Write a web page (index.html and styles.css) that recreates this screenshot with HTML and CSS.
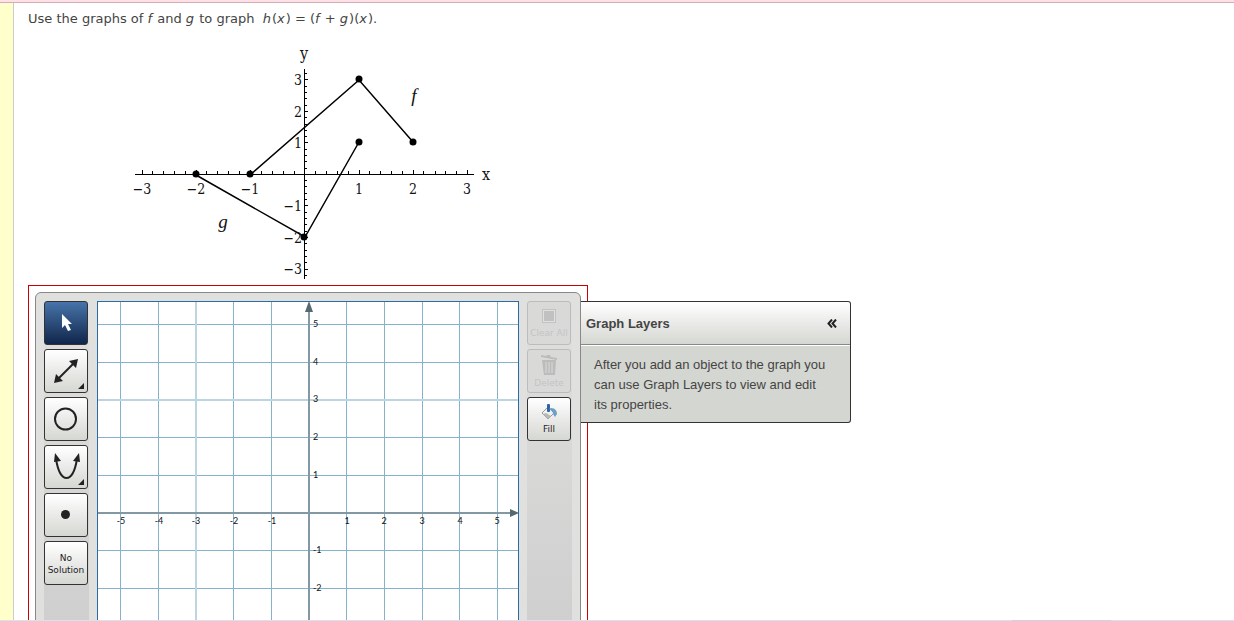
FILE: index.html
```html
<!DOCTYPE html>
<html lang="en">
<head>
<meta charset="utf-8">
<title>Graphing question</title>
<link rel="stylesheet" href="styles.css">
</head>
<body>
<div class="page">
  <div class="topline"></div>
  <div class="sheet">
    <div class="margin-strip"></div>
    <main class="question">
      <p class="prompt">Use the graphs of <i>f</i> and <i>g</i> to graph &nbsp;<i>h</i>(<i>x</i>) = (<i>f</i> + <i>g</i>)(<i>x</i>).</p>
      <svg class="figure" width="370" height="236" viewBox="-176 -129 370 236" role="img" aria-label="Graphs of f and g">
        <g class="axis">
          <path d="M-169 .5H170M.5 -105V105"/>
          <path d="M-161.500 0v-4M-151.500 0v-3M-140.500 0v-3M-129.500 0v-3M-118.500 0v-3M-107.500 0v-4M-97.500 0v-3M-86.500 0v-3M-75.500 0v-3M-64.500 0v-3M-53.500 0v-4M-42.500 0v-3M-31.500 0v-3M-20.500 0v-3M-9.500 0v-3M11.500 0v-3M22.500 0v-3M33.500 0v-3M44.500 0v-3M55.500 0v-4M65.500 0v-3M76.500 0v-3M87.500 0v-3M98.500 0v-3M109.500 0v-4M119.500 0v-3M131.500 0v-3M141.500 0v-3M152.500 0v-3M163.500 0v-4"/>
          <path d="M1 -100.500h2M1 -94.500h3M1 -87.500h2M1 -81.500h2M1 -75.500h2M1 -68.500h2M1 -62.500h3M1 -56.500h2M1 -49.500h2M1 -43.500h2M1 -37.500h2M1 -31.500h3M1 -24.500h2M1 -18.500h2M1 -12.500h2M1 -5.500h2M1 6.500h2M1 12.500h2M1 19.500h2M1 25.500h2M1 31.500h3M1 38.500h2M1 44.500h2M1 50.500h2M1 57.500h2M1 63.500h3M1 69.500h2M1 76.500h2M1 82.500h2M1 88.500h2M1 95.500h3M1 101.500h2"/>
        </g>
        <g class="curve"><path d="M-54 1L55 -94L109 -32M-108 1L1 63L55 -32"/></g>
        <g>
          <circle cx="-54" cy="0" r="3.500"/><circle cx="55" cy="-95" r="3.500"/><circle cx="109" cy="-32" r="3.500"/>
          <circle cx="-108" cy="0" r="3.500"/><circle cx="0" cy="63" r="3.500"/><circle cx="55" cy="-32" r="3.500"/>
        </g>
        <g class="num mid">
          <text x="-162" y="20">−3</text><text x="-108" y="20">−2</text><text x="-54" y="20">−1</text>
          <text x="55" y="20">1</text><text x="109" y="20">2</text><text x="163" y="20">3</text>
        </g>
        <g class="num end">
          <text x="-2" y="-89">3</text><text x="-2" y="-57">2</text><text x="-2" y="-26">1</text>
          <text x="-2" y="37">−1</text><text x="-2" y="69">−2</text><text x="-2" y="100">−3</text>
        </g>
        <g class="name mid"><text x="0" y="-115">y</text><text x="182" y="6">x</text></g>
        <g class="name slant mid"><text x="110" y="-72">f</text><text x="-81" y="54">g</text></g>
      </svg>

      <div class="tool-frame">
        <div class="tool">
          <div class="rail">
            <button class="btn btn-active" type="button" aria-label="Select">
              <svg width="42" height="42" viewBox="0 0 42 42"><path fill="#fff" d="M17 12v14l3-3 3 6 3-1-3-6h4z"/></svg>
            </button>
            <button class="btn" type="button" aria-label="Line">
              <svg width="42" height="42" viewBox="0 0 42 42"><path d="M13 29L30 12" stroke="#222" stroke-width="2"/><path fill="#222" d="M33 9l-2 9-7-7zM9 33l2-9 7 7zM39 33v6h-6z"/></svg>
            </button>
            <button class="btn" type="button" aria-label="Circle">
              <svg width="42" height="42" viewBox="0 0 42 42"><circle cx="20.500" cy="21" r="10.500" fill="none" stroke="#222" stroke-width="2"/></svg>
            </button>
            <button class="btn" type="button" aria-label="Parabola">
              <svg width="42" height="42" viewBox="0 0 42 42"><path d="M11 13C13 25 16 32 21.500 32S30 25 32 13" fill="none" stroke="#222" stroke-width="2"/><path fill="#222" d="M10 7l6 8-7 1zM34 7l1 9-7-1zM39 33v6h-6z"/></svg>
            </button>
            <button class="btn" type="button" aria-label="Point">
              <svg width="42" height="42" viewBox="0 0 42 42"><circle cx="20.500" cy="20.500" r="4.500" fill="#222"/></svg>
            </button>
            <button class="btn btn-text" type="button">No<br>Solution</button>
          </div>

          <svg class="plot" viewBox="-211 -211 420 420" role="img" aria-label="Coordinate grid">
            <path class="grid" d="M-188.500 -211V209M-150.500 -211V209M-75.500 -211V209M-37.500 -211V209M37.500 -211V209M75.500 -211V209M113.500 -211V209M150.500 -211V209M188.500 -211V209M-211 -188.500H209M-211 -150.500H209M-211 -75.500H209M-211 -37.500H209M-211 37.500H209M-211 75.500H209M-211 150.500H209M-211 188.500H209"/>
            <path class="grid grid-soft" d="M-113 -211V209M-211 -113H209M-211 113H209"/>
            <path class="main-axis" d="M0 -204V209M-211 0H204"/>
            <path class="arrow" d="M0 -212l4 11h-8zM210 0l-9 4v-8z"/>
            <g class="tick mid">
              <text x="-188" y="11">-5</text><text x="-150" y="11">-4</text><text x="-113" y="11">-3</text><text x="-75" y="11">-2</text><text x="-37" y="11">-1</text>
              <text x="38" y="11">1</text><text x="75" y="11">2</text><text x="113" y="11">3</text><text x="151" y="11">4</text><text x="188" y="11">5</text>
            </g>
            <g class="tick">
              <text x="4" y="-186">5</text><text x="4" y="-148">4</text><text x="4" y="-111">3</text><text x="4" y="-73">2</text><text x="4" y="-35">1</text>
              <text x="4" y="40">-1</text><text x="4" y="78">-2</text>
            </g>
          </svg>

          <div class="rail">
            <button class="btn btn-off" type="button" disabled>
              <svg width="22" height="20" viewBox="0 0 22 20"><rect x="4.500" y="2.500" width="13" height="13" fill="#e4e4e4" stroke="#bbb"/><rect x="6" y="4" width="10" height="10" fill="#b8b8b8"/></svg>
              <span>Clear All</span>
            </button>
            <button class="btn btn-off" type="button" disabled>
              <svg width="20" height="23" viewBox="0 0 20 23"><path fill="#b0b0b0" d="M2 1l5 1 1-1h3l1 2 6 1v2L2 3zM3 6h14l-1 15H5z"/><path d="M7 8v11M10 8v11M13 8v11" stroke="#ddd"/></svg>
              <span>Delete</span>
            </button>
            <button class="btn" type="button">
              <svg width="22" height="20" viewBox="0 0 22 20"><path d="M10 4l6 6-6 6-6-6z" fill="#f0f0ee" stroke="#999"/><path d="M5 11l5 5 3-3-5-3z" fill="#b8b8b6"/><rect x="9" y="1" width="3" height="8" rx="1" fill="#2c64a8"/><path d="M13 5c4 0 6 3 6 6l-2 3-2-3c0-2-1-4-4-5z" fill="#6d9fc8"/></svg>
              <span>Fill</span>
            </button>
          </div>

          <aside class="layers">
            <div class="layers-head">
              <h2 class="layers-title">Graph Layers</h2>
              <button class="collapse" type="button" aria-label="Collapse">
                <svg width="10" height="9" viewBox="0 0 10 9"><path d="M5 .5L1.500 4.500 5 8.500M9 .5L5.500 4.500 9 8.500" fill="none" stroke="#222" stroke-width="2"/></svg>
              </button>
            </div>
            <p class="layers-text">After you add an object to the graph you can use Graph Layers to view and edit its properties.</p>
          </aside>
        </div>
      </div>
    </main>
  </div>
  <div class="bottomline"></div>
</div>
</body>
</html>
```
FILE: styles.css
```css
* { box-sizing: border-box; }
body {
  margin: 0;
  background: #fff;
  color: #444;
  font-family: "Liberation Sans", Arial, sans-serif;
  font-size: 13px;
}
svg { display: block; }
.page {
  height: 100vh;
  display: flex;
  flex-direction: column;
  overflow: hidden;
}
.topline {
  flex: none;
  height: 3px;
  background: #ffe0e6;
  border-bottom: 1px solid #d0b0b8;
}
.sheet {
  flex: 1;
  min-height: 0;
  display: flex;
  overflow: hidden;
}
.margin-strip {
  flex: none;
  width: 14px;
  background: #ffffcc;
  border-right: 1px solid #ccc;
}
.bottomline {
  flex: none;
  height: 1px;
  background: linear-gradient(90deg, #d6e2ee 82%, #ccd4e4 82%, #ccd4e4 90%, #d6e2ee 90%);
}
.question { flex: 1; padding: 6px 14px; }
.prompt {
  margin: 0 0 16px;
  font-family: "DejaVu Sans", Verdana, sans-serif;
  line-height: 20px;
}
.prompt i { margin-right: 1px; }
.figure { margin: 0 0 4px 100px; }
.axis { stroke: #000; fill: none; shape-rendering: crispEdges; }
.curve { stroke: #000; stroke-width: 1.5; fill: none; }
.num, .name { font-family: "DejaVu Serif Condensed", "DejaVu Serif", serif; fill: #111; }
.num { font-size: 14px; }
.name { font-size: 16px; }
.slant { font-family: "Liberation Serif", serif; font-size: 19px; font-style: italic; }
.mid { text-anchor: middle; }
.end { text-anchor: end; }

.tool-frame {
  width: fit-content;
  padding: 6px;
  border: 1px solid #c00;
}
.tool {
  position: relative;
  display: flex;
  gap: 8px;
  padding: 8px;
  background: #e0e0de;
  border: 1px solid #888;
  border-radius: 6px;
}
.rail {
  width: 45px;
  display: flex;
  flex-direction: column;
  gap: 4px;
  background: linear-gradient(#e0e0de, #cfcfcf 320px);
}
.btn {
  width: 44px;
  height: 44px;
  padding: 0;
  display: flex;
  flex-direction: column;
  align-items: center;
  justify-content: center;
  border: 1px solid #333;
  border-radius: 3px;
  background: linear-gradient(#fff, #d5d7d2);
  color: #222;
  font-family: "DejaVu Sans", Verdana, sans-serif;
  font-size: 9px;
  line-height: 12px;
  white-space: nowrap;
}
.btn-text { padding-top: 2px; }
.btn-active { background: linear-gradient(#4774aa, #10264a); }
.btn-off {
  background: #d9d9d8;
  border-color: #bcbcbc;
  color: #c4c4c4;
}
.btn-off svg { opacity: 0.7; }
.plot {
  width: 422px;
  height: 422px;
  background: #fff;
  border: 1px solid #2a6ca5;
}
.grid { stroke: #86b3c9; }
.grid-soft { stroke: #bcd5e1; stroke-width: 2; }
.main-axis { stroke: #8298a4; stroke-width: 2; }
.arrow { fill: #566970; }
.tick { font-family: Lato, sans-serif; font-size: 9px; fill: #111; }

.layers {
  position: absolute;
  top: 8px;
  left: 100%;
  margin-left: 1px;
  width: 270px;
  background: #d4d6d1;
  border: 1px solid #333;
  border-left: 0;
  border-radius: 0 3px 3px 0;
}
.layers-head {
  height: 43px;
  padding: 0 13px 0 5px;
  display: flex;
  align-items: center;
  justify-content: space-between;
  background: linear-gradient(#fff, #d5d7d2);
  border-bottom: 1px solid #888;
  border-radius: 0 3px 0 0;
}
.layers-title { margin: 0; font-size: 13px; }
.collapse { padding: 0; border: 0; background: none; }
.layers-text {
  margin: 0;
  padding: 9px 20px 7px 13px;
  border-top: 1px solid #fff;
  line-height: 20px;
}
```
